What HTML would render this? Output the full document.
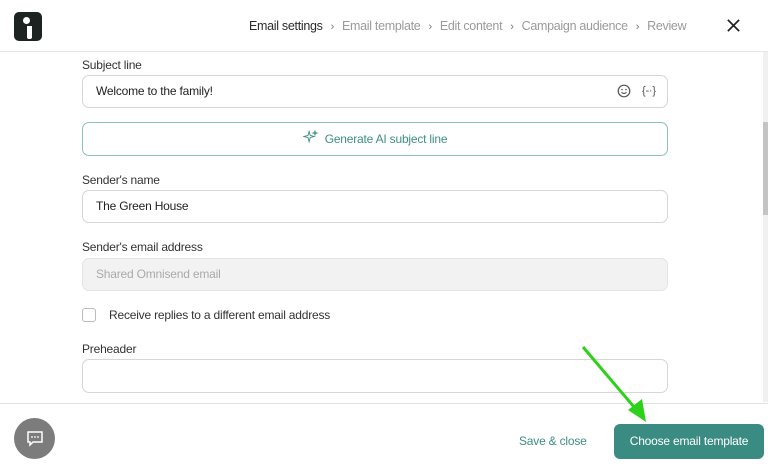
<!DOCTYPE html>
<html><head><meta charset="utf-8"><style>
*{box-sizing:border-box;margin:0;padding:0}
body{width:768px;height:467px;overflow:hidden;background:#fff;font-family:"Liberation Sans",sans-serif;position:relative;color:#2b2b2b}
.hdr{position:absolute;left:0;top:0;width:768px;height:52px;border-bottom:1px solid #e6e6e6}
.logo{position:absolute;left:14px;top:12px;width:28px;height:29px;background:#1d2321;border-radius:5px}
.crumbs{position:absolute;left:249px;top:19px;font-size:12.5px;letter-spacing:-0.3px;color:#9a9a9a;white-space:nowrap}
.crumbs b{font-weight:normal;color:#2b2b2b}
.crumbs i{font-style:normal;margin:0 8px;font-size:11px;color:#777}
.x{position:absolute;left:726px;top:18px}
.lbl{position:absolute;left:82px;font-size:12px;color:#333;letter-spacing:-0.2px}
.inp{position:absolute;left:82px;width:586px;height:33px;border:1px solid #d6d6d6;border-radius:7px;font-size:12px;padding:0 13px;line-height:31px;color:#222;letter-spacing:-0.2px}
.sb{position:absolute;left:763px;top:52px;width:5px;height:350px;background:#f1f1f1}
.th{position:absolute;left:763px;top:122px;width:5px;height:93px;background:#c4c4c4}
.ftr{position:absolute;left:0;top:403px;width:768px;height:64px;border-top:1px solid #e2e2e2;background:#fff}
</style></head><body>
<div class="hdr">
<div class="logo"><div style="position:absolute;left:9px;top:5px;width:7px;height:7px;border-radius:50%;background:#fff"></div><div style="position:absolute;left:13px;top:14px;width:5px;height:13px;background:#fff;border-radius:0 0 2px 2px"></div></div>
<div class="crumbs"><b>Email settings</b><i>›</i>Email template<i>›</i>Edit content<i>›</i>Campaign audience<i>›</i>Review</div>
<svg class="x" width="15" height="15" viewBox="0 0 16 16"><path d="M2 2L14 14M14 2L2 14" stroke="#222" stroke-width="1.8"/></svg>
</div>
<div class="lbl" style="top:58px">Subject line</div>
<div class="inp" style="top:75px">Welcome to the family!
<svg style="position:absolute;left:534px;top:8px" width="14" height="14" viewBox="0 0 14 14"><circle cx="7" cy="7" r="5.8" fill="none" stroke="#555" stroke-width="1.2"/><circle cx="5" cy="5.5" r=".8" fill="#555"/><circle cx="9" cy="5.5" r=".8" fill="#555"/><path d="M4.5 8.3Q7 10.5 9.5 8.3" fill="none" stroke="#555" stroke-width="1.1"/></svg>
<span style="position:absolute;left:559px;top:0;font-size:11px;color:#555">{-·}</span></div>
<div class="inp" style="top:122px;height:34px;border-color:#8cc2bb;text-align:center;color:#3d8f85;line-height:32px;font-size:12px"><svg style="vertical-align:-3px;margin-right:6px" width="16" height="16" viewBox="0 0 16 16"><path d="M6 4L7.3 8.7 12 10 7.3 11.3 6 16 4.7 11.3 0 10 4.7 8.7Z" transform="translate(1,-2) scale(.85)" fill="none" stroke="#3d8f85" stroke-width="1.1"/><path d="M12 1L12.6 2.6 14 3 12.6 3.4 12 5 11.4 3.4 10 3 11.4 2.6Z" fill="none" stroke="#3d8f85" stroke-width=".9"/></svg>Generate AI subject line</div>
<div class="lbl" style="top:173px">Sender's name</div>
<div class="inp" style="top:190px">The Green House</div>
<div class="lbl" style="top:240px">Sender's email address</div>
<div class="inp" style="top:258px;background:#f2f2f2;border-color:#e4e4e4;color:#aaa">Shared Omnisend email</div>
<div style="position:absolute;left:82px;top:308px;width:14px;height:14px;border:1px solid #bbb;border-radius:3px"></div>
<div class="lbl" style="left:109px;top:308px">Receive replies to a different email address</div>
<div class="lbl" style="top:342px">Preheader</div>
<div class="inp" style="top:359px;height:34px"></div>
<div class="sb"></div><div class="th"></div>
<div class="ftr">
<div style="position:absolute;left:14px;top:14px;width:41px;height:41px;border-radius:50%;background:#7c7c7c"><svg style="position:absolute;left:12px;top:12px" width="18" height="18" viewBox="0 0 18 18"><path d="M2 2H16V12H7L4 15V12H2Z" fill="none" stroke="#fff" stroke-width="1.5"/><circle cx="6" cy="7" r=".9" fill="#fff"/><circle cx="9" cy="7" r=".9" fill="#fff"/><circle cx="12" cy="7" r=".9" fill="#fff"/></svg></div>
<div style="position:absolute;left:519px;top:30px;font-size:12px;color:#3d8f85;letter-spacing:-0.2px">Save &amp; close</div>
<div style="position:absolute;left:614px;top:20px;width:150px;height:35px;border-radius:6px;background:#3a8c83;color:#fff;font-size:12px;text-align:center;line-height:35px;letter-spacing:-0.2px">Choose email template</div>
</div>
<svg style="position:absolute;left:0;top:0" width="768" height="467"><path d="M583 347L640 414" stroke="#2ed11a" stroke-width="3"/><path d="M646 422L628 410 642 399Z" fill="#2ed11a"/></svg>
</body></html>
